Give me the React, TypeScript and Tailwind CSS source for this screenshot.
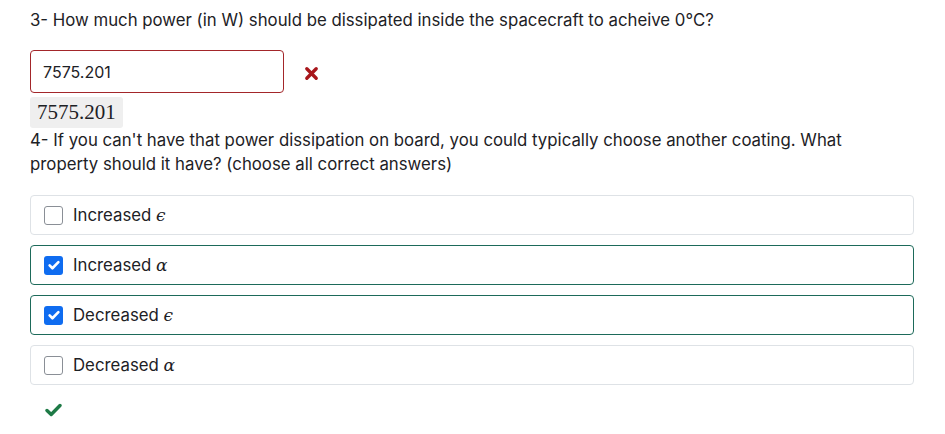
import React from "react";

const font = { fontFamily: "Inter, 'Noto Sans', sans-serif" };

function Box({ checked }: { checked: boolean }) {
  if (checked) {
    return (
      <span className="flex h-[19px] w-[19px] shrink-0 items-center justify-center rounded-[3px] bg-[#0f6cf0]">
        <svg width="14" height="14" viewBox="0 0 16 16">
          <path d="M3 8.5l3.2 3.2L13 4.8" fill="none" stroke="#fff" strokeWidth="3" strokeLinecap="round" strokeLinejoin="round" />
        </svg>
      </span>
    );
  }
  return <span className="h-[19px] w-[19px] shrink-0 rounded-[3px] border border-[#8a8f96] bg-white" />;
}

function Option({ label, sym, checked }: { label: string; sym: string; checked: boolean }) {
  return (
    <div
      className={`flex h-[40px] items-center gap-[10px] rounded-[4px] border pl-[13px] ${
        checked ? "border-[#1d6a5a]" : "border-[#dee2e6]"
      }`}
    >
      <Box checked={checked} />
      <span className="mt-[2px] text-[16.8px] text-[#1d2125]">
        {label}{" "}
        <span style={{ fontFamily: "'DejaVu Serif', 'Liberation Serif', serif" }} className="italic text-[17px]">
          {sym}
        </span>
      </span>
    </div>
  );
}

export default function App() {
  return (
    <div style={font} className="min-h-[434px] w-[945px] bg-white pl-[30px] pr-[31px] pt-[8px] text-[#1d2125]">
      <p className="text-[16.8px] leading-[24px]">
        3- How much power (in W) should be dissipated inside the spacecraft to acheive 0°C?
      </p>
      <div className="mt-[18px] flex items-center">
        <div className="flex h-[43px] w-[254px] items-center rounded-[4px] border border-[#a3262a] pl-[12px] text-[16px]">
          7575.201
        </div>
        <svg className="ml-[20px] mt-[3px]" width="15" height="15" viewBox="0 0 16 16">
          <path d="M3 3l10 10M13 3L3 13" stroke="#a8161b" strokeWidth="3.6" strokeLinecap="round" />
        </svg>
      </div>
      <div className="mt-[4px] inline-flex h-[31px] items-center rounded-[3px] bg-[#efefef] px-[7px]">
        <span style={{ fontFamily: "'Liberation Serif', serif" }} className="text-[21px]">
          7575.201
        </span>
      </div>
      <p className="w-[860px] text-[16.8px] leading-[24px]">
        4- If you can't have that power dissipation on board, you could typically choose another coating. What property
        should it have? (choose all correct answers)
      </p>
      <div className="mt-[19px] flex flex-col gap-[10px]">
        <Option label="Increased" sym="ϵ" checked={false} />
        <Option label="Increased" sym="α" checked={true} />
        <Option label="Decreased" sym="ϵ" checked={true} />
        <Option label="Decreased" sym="α" checked={false} />
      </div>
      <div className="mt-[18px] pl-[15px]">
        <svg width="17" height="14" viewBox="0 0 17 14">
          <path d="M2 7.5l4.2 4L15 2.5" fill="none" stroke="#1e7a46" strokeWidth="3.4" strokeLinecap="round" strokeLinejoin="round" />
        </svg>
      </div>
    </div>
  );
}
